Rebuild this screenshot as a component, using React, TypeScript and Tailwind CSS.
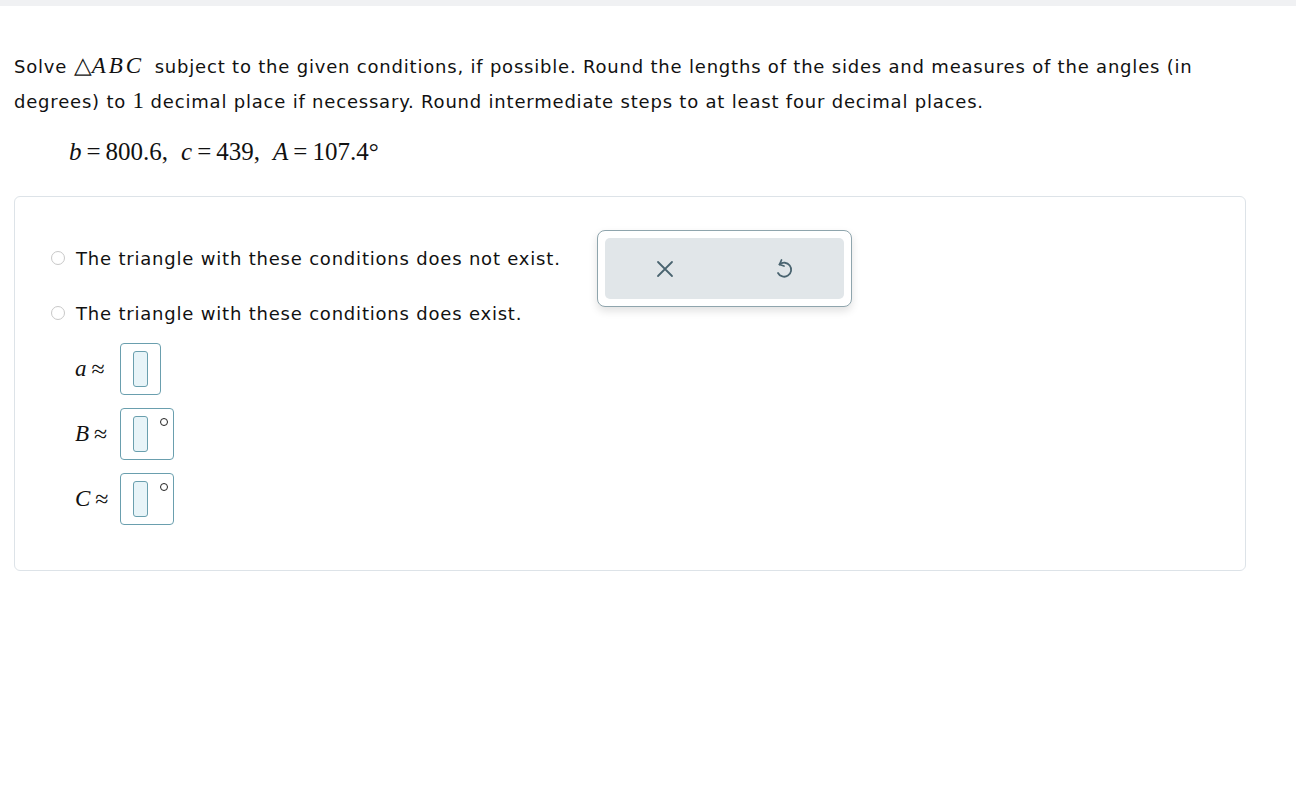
import React from "react";

const serif = { fontFamily: '"Liberation Serif", "Times New Roman", serif' };

function Eq() {
  return <span className="mx-[5px]">=</span>;
}

function Field({ degree }: { degree?: boolean }) {
  return (
    <div className={`flex h-[52px] items-start rounded-[4px] border border-[#6a9fae] bg-white ${degree ? "w-[54px]" : "w-[41px]"}`}>
      <div className="ml-[12px] mt-[7px] h-[36px] w-[15px] rounded-[3px] border border-[#6a9fae] bg-[#e8f4f8]" />
      {degree && <div className="ml-[12px] mt-[9px] h-[8px] w-[8px] rounded-full border-[1.5px] border-[#222]" />}
    </div>
  );
}

export default function App() {
  return (
    <div className="h-[796px] w-[1296px] bg-white text-[#111]" style={{ fontFamily: '"DejaVu Sans", Verdana, sans-serif' }}>
      <div className="h-[6px] bg-[#f0f1f3]" />
      <div className="w-[1240px] px-[14px] pt-[43px] text-[18px] leading-[34px] tracking-[0.8px]">
        <p>
          Solve <span className="text-[23px] tracking-normal" style={serif}>△<i className="mr-[4px] tracking-[3px]">ABC</i></span> subject to the given conditions, if possible. Round the lengths of the sides and measures of the angles (in degrees) to <span className="text-[23px] tracking-normal" style={serif}>1</span> decimal place if necessary. Round intermediate steps to at least four decimal places.
        </p>
        <div className="h-[50px] pl-[55px] pt-[16px] text-[25px] leading-[34px] tracking-normal" style={serif}>
          <i>b</i><Eq />800.6,<span className="inline-block w-[13px]" /><i>c</i><Eq />439,<span className="inline-block w-[13px]" /><i>A</i><Eq />107.4°
        </div>
      </div>
      <div className="mx-[14px] mt-[27px] h-[375px] w-[1232px] rounded-[6px] border border-[#dde3e8] pl-[36px] pt-[33px]">
        <div className="flex">
          <div className="w-[546px] pt-[16px]">
            <label className="flex h-[24px] items-center gap-[11px] text-[18px] tracking-[0.8px]">
              <span className="h-[14px] w-[14px] shrink-0 rounded-full border border-[#c8c8c8] bg-white" />
              The triangle with these conditions does not exist.
            </label>
            <label className="mt-[31px] flex h-[24px] items-center gap-[11px] text-[18px] tracking-[0.8px]">
              <span className="h-[14px] w-[14px] shrink-0 rounded-full border border-[#c8c8c8] bg-white" />
              The triangle with these conditions does exist.
            </label>
            <div className="mt-[18px] flex flex-col gap-[13px] pl-[24px]">
              {[
                { l: "a", d: false },
                { l: "B", d: true },
                { l: "C", d: true },
              ].map((r) => (
                <div key={r.l} className="flex items-center">
                  <span className="flex w-[45px] items-center text-[23px]" style={serif}>
                    <i>{r.l}</i>
                    <span className="ml-[5px] text-[24px]">≈</span>
                  </span>
                  <Field degree={r.d} />
                </div>
              ))}
            </div>
          </div>
          <div className="h-[77px] w-[255px] rounded-[8px] border border-[#8fa5ad] bg-white p-[7px] shadow-[0_4px_8px_rgba(0,0,0,0.12)]">
            <div className="flex h-full items-center rounded-[5px] bg-[#e1e6e9]">
              <div className="flex w-[120px] justify-center">
                <svg width="18" height="18" viewBox="0 0 18 18" fill="none" stroke="#4a6470" strokeWidth="1.8" strokeLinecap="round">
                  <path d="M2 2 L16 16 M16 2 L2 16" />
                </svg>
              </div>
              <div className="flex w-[120px] justify-center">
                <svg width="20" height="22" viewBox="0 0 20 22" fill="none" stroke="#4a6470" strokeWidth="1.8" strokeLinecap="round" strokeLinejoin="round">
                  <path d="M5.5 6.5 A7 7 0 1 1 4 15" />
                  <path d="M7.5 2 L5.5 6.5 L10 8" />
                </svg>
              </div>
            </div>
          </div>
        </div>
      </div>
    </div>
  );
}
